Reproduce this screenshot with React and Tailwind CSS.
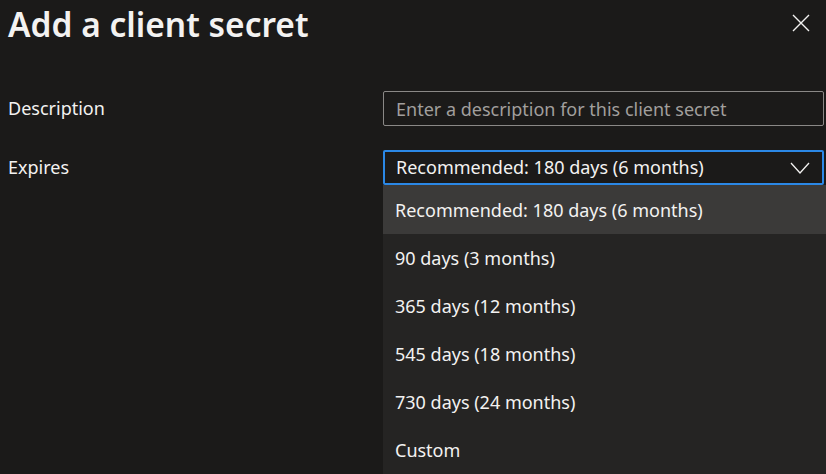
import React from "react";

const options = [
  "Recommended: 180 days (6 months)",
  "90 days (3 months)",
  "365 days (12 months)",
  "545 days (18 months)",
  "730 days (24 months)",
  "Custom",
];

const App = () => {
  return (
    <div
      className="w-[826px] h-[474px] overflow-hidden bg-[#1b1a19] text-[#f3f2f1]"
      style={{ fontFamily: '"Noto Sans", "Open Sans", sans-serif' }}
    >
      <div className="flex items-start justify-between pl-2 pr-4">
        <h1 className="text-[33.5px] leading-[48px] font-semibold">
          Add a client secret
        </h1>
        <button className="mt-[14px] text-[#f3f2f1]">
          <svg width="18" height="18" viewBox="0 0 18 18" fill="none">
            <path d="M1 1L17 17M17 1L1 17" stroke="currentColor" strokeWidth="1.4" />
          </svg>
        </button>
      </div>

      <div className="mt-[43px] pl-2 flex flex-col gap-6">
        <div className="grid grid-cols-[375px_441px] items-center">
          <label className="text-[18px]">Description</label>
          <input
            placeholder="Enter a description for this client secret"
            className="h-[35px] border border-[#8a8886] rounded-[2px] bg-transparent px-3 text-[18px] placeholder-[#a19f9d] outline-none"
          />
        </div>

        <div className="grid grid-cols-[375px_441px] items-center">
          <label className="text-[18px]">Expires</label>
          <div className="relative">
            <div className="h-[35px] border-2 border-[#2b88e6] rounded-[2px] flex items-center justify-between pl-[11px] pr-3 text-[18px]">
              <span>Recommended: 180 days (6 months)</span>
              <svg width="20" height="12" viewBox="0 0 20 12" fill="none">
                <path d="M1 1L10 11L19 1" stroke="currentColor" strokeWidth="1.3" />
              </svg>
            </div>
            <ul className="absolute left-0 top-[35px] w-[450px] bg-[#252423]">
              {options.map((opt, i) => (
                <li
                  key={opt}
                  className={`flex items-center pl-3 text-[18px] ${
                    i === 0 ? "h-[49px] pt-px bg-[#3b3a39]" : "h-12"
                  }`}
                >
                  {opt}
                </li>
              ))}
            </ul>
          </div>
        </div>
      </div>
    </div>
  );
};

export default App;
